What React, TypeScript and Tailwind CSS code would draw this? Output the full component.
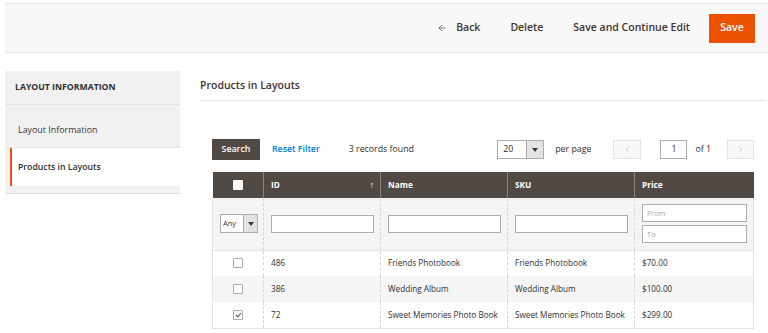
import { ArrowLeft, ChevronLeft, ChevronRight } from "lucide-react";

const rows = [
  { id: "486", name: "Friends Photobook", sku: "Friends Photobook", price: "$70.00", checked: false },
  { id: "386", name: "Wedding Album", sku: "Wedding Album", price: "$100.00", checked: false },
  { id: "72", name: "Sweet Memories Photo Book", sku: "Sweet Memories Photo Book", price: "$299.00", checked: true },
];

function Caret() {
  return (
    <svg width="6" height="4" viewBox="0 0 6 4" aria-hidden="true">
      <path d="M0 0h6L3 4z" fill="#41362f" />
    </svg>
  );
}

function Checkbox({ checked = false }: { checked?: boolean }) {
  return (
    <span className="mx-auto flex h-[10px] w-[10px] items-center justify-center rounded-[1px] border border-[#adadad] bg-white">
      {checked && (
        <svg width="7" height="6" viewBox="0 0 7 6" aria-hidden="true">
          <path d="M1 3l1.8 1.8L6 1" fill="none" stroke="#514943" strokeWidth="1.1" />
        </svg>
      )}
    </span>
  );
}

function TextInput({ placeholder }: { placeholder?: string }) {
  return (
    <div className="flex h-[18px] w-full items-center border border-[#adadad] bg-white px-[4px] text-[7.5px] text-[#a9a9a9]">
      {placeholder}
    </div>
  );
}

export default function App() {
  return (
    <div className="h-[333px] w-[768px] overflow-hidden bg-white font-['Open_Sans',sans-serif] text-[#303030]">
      {/* Page actions */}
      <div className="ml-[5px] mt-[3px] flex h-[50px] items-center justify-end border-y border-[#ececec] bg-[#f8f8f8] pr-[13px] text-[10.5px] font-semibold text-[#41362f]">
        <span className="flex items-center">
          <ArrowLeft size={10} strokeWidth={1.6} className="mr-[9px]" />
          Back
        </span>
        <span className="ml-[30px]">Delete</span>
        <span className="ml-[30px]">Save and Continue Edit</span>
        <span className="ml-[19px] flex h-[29px] w-[46px] items-center justify-center bg-[#eb5202] text-white">
          Save
        </span>
      </div>

      <div className="mt-[18px] flex items-start">
        {/* Sidebar tabs */}
        <aside className="ml-[5px] w-[175px] shrink-0 border-b border-[#e3e3e3] bg-[#f1f1f1]">
          <div className="flex h-[34px] items-center border-b border-[#e3e3e3] pl-[10px] pt-[1px] text-[8.7px] font-bold uppercase text-[#303030]">
            Layout Information
          </div>
          <div className="flex h-[43px] items-center border-b border-[#e3e3e3] pl-[13px] pt-[7px] text-[8.9px] text-[#41362f]">
            Layout Information
          </div>
          <div className="ml-[5px] flex h-[38px] items-center border-l-2 border-[#eb5202] bg-white pl-[6px] pt-[1px] text-[8.7px] font-semibold text-[#303030]">
            Products in Layouts
          </div>
          <div className="h-[7px]" />
        </aside>

        {/* Main */}
        <main className="ml-[20px] w-[565px]">
          <div className="flex h-[30px] items-center border-b border-[#e3e3e3] pt-[1px] text-[10.5px] font-semibold text-[#41362f]">
            Products in Layouts
          </div>

          <div className="mx-[12px] mt-[38px] flex h-[21px] items-center text-[8.8px]">
            <span className="flex h-[21px] w-[48px] items-center justify-center bg-[#514943] font-semibold text-white">
              Search
            </span>
            <span className="ml-[12px] font-semibold text-[#007bdb]">Reset Filter</span>
            <span className="ml-[29px]">3 records found</span>

            <div className="ml-auto flex h-[19px] w-[47px] border border-[#adadad] bg-white">
              <span className="flex flex-1 items-center pl-[5px]">20</span>
              <span className="flex w-[17px] items-center justify-center border-l border-[#adadad] bg-[#e3e3e3]">
                <Caret />
              </span>
            </div>
            <span className="ml-[11px]">per page</span>
            <span className="ml-[22px] flex h-[19px] w-[28px] items-center justify-center border border-[#e3e3e3] bg-[#f8f8f8] text-[#b5b5b5]">
              <ChevronLeft size={11} strokeWidth={1.3} />
            </span>
            <span className="ml-[19px] flex h-[19px] w-[27px] items-center justify-center border border-[#adadad] bg-white">
              1
            </span>
            <span className="ml-[8px]">of 1</span>
            <span className="ml-[16px] mr-[-1px] flex h-[19px] w-[27px] items-center justify-center border border-[#e3e3e3] bg-[#f8f8f8] text-[#b5b5b5]">
              <ChevronRight size={11} strokeWidth={1.3} />
            </span>
          </div>

          <table className="mx-[12px] mt-[12px] w-[541px] table-fixed border-collapse text-left">
            <colgroup>
              <col className="w-[51px]" />
              <col className="w-[117px]" />
              <col className="w-[127px]" />
              <col className="w-[127px]" />
              <col className="w-[119px]" />
            </colgroup>
            <thead>
              <tr className="h-[26px] bg-[#514943] text-[8.3px] font-bold text-white">
                <th className="border-r border-[#8a837f] align-middle">
                  <span className="mx-auto block h-[10px] w-[10px] rounded-[1px] bg-white" />
                </th>
                <th className="border-r border-[#8a837f] pl-[7px] pr-[6px] font-bold">
                  <span className="flex items-center justify-between">
                    ID
                    <span className="text-[9px] font-normal">↑</span>
                  </span>
                </th>
                <th className="border-r border-[#8a837f] pl-[7px] font-bold">Name</th>
                <th className="border-r border-[#8a837f] pl-[7px] font-bold">SKU</th>
                <th className="pl-[7px] font-bold">Price</th>
              </tr>
            </thead>
            <tbody className="text-[8.2px]">
              <tr className="h-[52px] border-x border-b border-[#e3e3e3] bg-[#f4f4f4]">
                <td className="border-r border-dashed border-[#d6d6d6] pl-[7px]">
                  <div className="flex h-[19px] w-[38px] border border-[#adadad] bg-white text-[7.5px]">
                    <span className="flex flex-1 items-center pl-[2px]">Any</span>
                    <span className="flex w-[14px] items-center justify-center border-l border-[#adadad] bg-[#e3e3e3]">
                      <Caret />
                    </span>
                  </div>
                </td>
                <td className="border-r border-dashed border-[#d6d6d6] pl-[7px] pr-[6px]">
                  <TextInput />
                </td>
                <td className="border-r border-dashed border-[#d6d6d6] pl-[7px] pr-[6px]">
                  <TextInput />
                </td>
                <td className="border-r border-dashed border-[#d6d6d6] pl-[7px] pr-[6px]">
                  <TextInput />
                </td>
                <td className="pl-[7px] pr-[6px]">
                  <div className="flex flex-col gap-[3px]">
                    <TextInput placeholder="From" />
                    <TextInput placeholder="To" />
                  </div>
                </td>
              </tr>
              {rows.map((r, i) => (
                <tr
                  key={r.id}
                  className={`h-[26px] border-x border-[#e3e3e3] ${i === 1 ? "bg-[#f5f5f5]" : "bg-white"} ${i === rows.length - 1 ? "border-b" : ""}`}
                >
                  <td className="border-r border-dashed border-[#d6d6d6]">
                    <Checkbox checked={r.checked} />
                  </td>
                  <td className="border-r border-dashed border-[#d6d6d6] pl-[7px]">{r.id}</td>
                  <td className="border-r border-dashed border-[#d6d6d6] pl-[7px] whitespace-nowrap">{r.name}</td>
                  <td className="border-r border-dashed border-[#d6d6d6] pl-[7px] whitespace-nowrap">{r.sku}</td>
                  <td className="pl-[7px]">{r.price}</td>
                </tr>
              ))}
            </tbody>
          </table>
        </main>
      </div>
    </div>
  );
}
